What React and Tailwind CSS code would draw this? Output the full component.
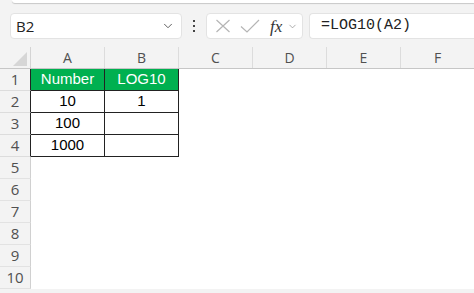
import { ChevronDown } from "lucide-react";

const cols = ["A", "B", "C", "D", "E", "F"];

const data = [
  ["Number", "LOG10"],
  ["10", "1"],
  ["100", ""],
  ["1000", ""],
];

function ColHeader() {
  return (
    <div className="flex h-[22px] border-b border-[#c6c6c6]">
      <div className="relative w-[31px] shrink-0 border-r border-[#d4d4d4]">
        <svg width="31" height="21" className="absolute left-0 top-0">
          <polygon points="27,5 27,19 13,19" fill="#d6d6d6" />
        </svg>
      </div>
      {cols.map((c) => (
        <div
          key={c}
          className="w-[74px] shrink-0 border-r border-[#dcdcdc] flex items-center justify-center text-[14px] text-[#505050]"
        >
          {c}
        </div>
      ))}
    </div>
  );
}

function Row({ n }) {
  const cells = data[n - 1];
  const inTable = n <= 4;
  return (
    <div className="flex h-[22px]">
      <div
        className={`w-[31px] shrink-0 border-r border-b flex items-center justify-center text-[15px] text-[#505050] bg-[#f3f3f3] ${
          inTable ? "border-r-[#222] border-b-[#dcdcdc]" : "border-[#d0d0d0] border-b-[#e2e2e2]"
        }`}
      >
        {n}
      </div>
      {cols.map((c, i) => {
        const tableCell = inTable && i < 2;
        const head = n === 1 && tableCell;
        return (
          <div
            key={c}
            className={`w-[74px] shrink-0 flex items-center justify-center text-[15px] font-['Liberation_Sans',sans-serif] ${
              tableCell ? "border-r border-b border-[#222]" : "bg-white"
            } ${head ? "bg-[#00b050] text-white" : "text-black bg-white"}`}
          >
            {tableCell ? cells[i] : ""}
          </div>
        );
      })}
    </div>
  );
}

export default function App() {
  return (
    <div className="w-[474px] h-[293px] overflow-hidden bg-[#f3f3f3] font-['Open_Sans',sans-serif]">
      {/* ribbon edge */}
      <div className="ml-[12px] h-[3px] bg-white rounded-bl-[5px] shadow-[0_1px_1px_rgba(0,0,0,0.18)]" />

      {/* formula bar */}
      <div className="flex items-center mt-[10px] h-[26px] pl-[10px]">
        <div className="w-[172px] h-full bg-white rounded-[4px] border border-[#e3e3e3] flex items-center justify-between pl-[5px] pr-[6px]">
          <span className="text-[15px] text-[#222]">B2</span>
          <ChevronDown size={14} strokeWidth={1.6} className="text-[#555]" />
        </div>
        <div className="w-[24px] flex flex-col items-center gap-[3px]">
          <span className="w-[2px] h-[2px] bg-[#444]" />
          <span className="w-[2px] h-[2px] bg-[#444]" />
          <span className="w-[2px] h-[2px] bg-[#444]" />
        </div>
        <div className="w-[97px] h-full bg-white rounded-[4px] border border-[#e3e3e3] flex items-center pl-[7px]">
          <svg width="16" height="14" viewBox="0 0 16 14" className="ml-[1px]">
            <path d="M1.5 1 L14.5 13 M14.5 1 L1.5 13" stroke="#b5b5b5" strokeWidth="1.2" fill="none" />
          </svg>
          <svg width="20" height="14" viewBox="0 0 20 14" className="ml-[9px]">
            <path d="M1 7.5 L7 13 L19 1" stroke="#b5b5b5" strokeWidth="1.2" fill="none" />
          </svg>
          <span className="ml-[10px] text-[17px] italic text-[#333] font-['Liberation_Serif',serif] leading-none">
            fx
          </span>
          <ChevronDown size={11} strokeWidth={1.5} className="ml-[5px] text-[#888]" />
        </div>
        <div className="ml-[6px] flex-1 h-full bg-white rounded-l-[4px] border border-r-0 border-[#e3e3e3] flex items-center pl-[11px]">
          <span className="text-[15px] text-[#222] font-['Liberation_Mono',monospace]">=LOG10(A2)</span>
        </div>
      </div>

      {/* grid */}
      <div className="mt-[8px]">
        <ColHeader />
        {[1, 2, 3, 4, 5, 6, 7, 8, 9, 10].map((n) => (
          <Row key={n} n={n} />
        ))}
      </div>
    </div>
  );
}
